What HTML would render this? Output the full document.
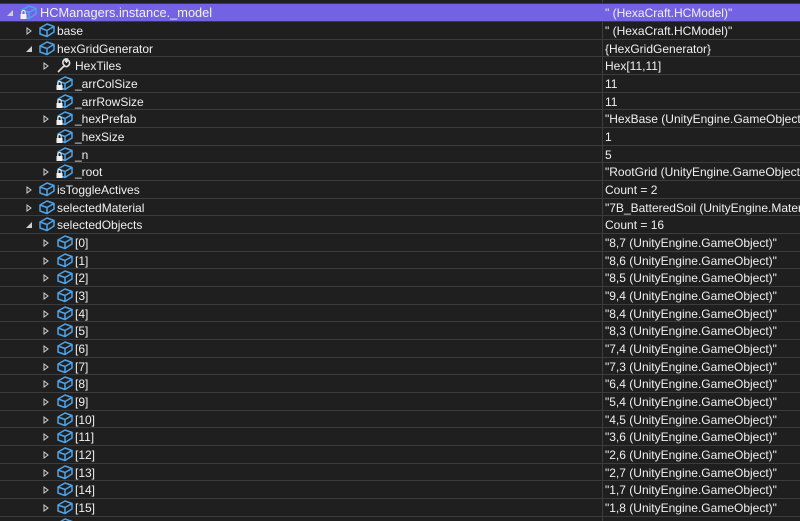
<!DOCTYPE html>
<html style="overflow:hidden;height:521px"><head><meta charset="utf-8"><style>
body{margin:0;width:800px;height:521px;overflow:hidden;background:#1f1f1f;font-family:"Liberation Sans",sans-serif;font-size:12px;color:#f0f0f0;position:relative}
.list{position:absolute;top:-13.2px;left:0;width:800px}
.r{height:16.67px;border-bottom:1px solid #3c3c3c;position:relative;white-space:nowrap}
.r.sel{background:#7462e4}
.n{position:absolute;top:2px}
.v{position:absolute;left:605px;top:2px}
.div{position:absolute;left:602px;top:0;width:1px;height:521px;background:#3c3c3c}
.ar{position:absolute;top:5px}
.ic{position:absolute;top:0px}
</style></head><body>
<svg width="0" height="0" style="position:absolute"><defs>
<g id="box"><path d="M2 6 L9 2 L16 4.5 L16 10 L9 14.5 L2 12 Z M2 6 L9 8.5 L16 4.5 M9 8.5 L9 14.5" fill="none" stroke="#4ea3e8" stroke-width="1.5" stroke-linejoin="round"/></g>
<g id="lock"><rect x="0.5" y="10" width="6" height="5" fill="#f0f0f0"/><path d="M1.8 10 V8.2 a1.7 1.7 0 0 1 3.4 0 V10" fill="none" stroke="#f0f0f0" stroke-width="1.1"/></g>
<g id="col"><path d="M1 1 L5 4 L1 7 Z" fill="none" stroke="#d0d0d0" stroke-width="1"/></g>
<g id="exp"><path d="M6 1 L6 7 L0 7 Z" fill="#d0d0d0"/></g>
</defs></svg>
<div class="div"></div>
<div class="list">
<div class="r"></div>
<div class="r sel"><svg class="ar" style="left:7px" width="8" height="8"><use href="#exp"/></svg><svg class="ic" style="left:20px" width="18" height="16"><use href="#box"/><use href="#lock"/></svg><span class="n" style="left:40px;font-size:12.8px;top:1px">HCManagers.instance._model</span><span class="v">" (HexaCraft.HCModel)"</span></div>
<div class="r"><svg class="ar" style="left:26px" width="8" height="8"><use href="#col"/></svg><svg class="ic" style="left:38px" width="18" height="16"><use href="#box"/></svg><span class="n" style="left:57px">base</span><span class="v">" (HexaCraft.HCModel)"</span></div>
<div class="r"><svg class="ar" style="left:26px" width="8" height="8"><use href="#exp"/></svg><svg class="ic" style="left:38px" width="18" height="16"><use href="#box"/></svg><span class="n" style="left:57px">hexGridGenerator</span><span class="v">{HexGridGenerator}</span></div>
<div class="r"><svg class="ar" style="left:43px" width="8" height="8"><use href="#col"/></svg><svg class="ic" style="left:56px" width="18" height="16"><path d="M2 15 L9 8 M8 9 a3.5 3.5 0 1 0 4-6 L10.5 5 L9.5 4 L11 2 a3.5 3.5 0 0 0 -3 6" fill="none" stroke="#e0e0e0" stroke-width="1.6"/></svg><span class="n" style="left:75px">HexTiles</span><span class="v">Hex[11,11]</span></div>
<div class="r"><svg class="ic" style="left:56px" width="18" height="16"><use href="#box"/><use href="#lock"/></svg><span class="n" style="left:75px">_arrColSize</span><span class="v">11</span></div>
<div class="r"><svg class="ic" style="left:56px" width="18" height="16"><use href="#box"/><use href="#lock"/></svg><span class="n" style="left:75px">_arrRowSize</span><span class="v">11</span></div>
<div class="r"><svg class="ar" style="left:43px" width="8" height="8"><use href="#col"/></svg><svg class="ic" style="left:56px" width="18" height="16"><use href="#box"/><use href="#lock"/></svg><span class="n" style="left:75px">_hexPrefab</span><span class="v">"HexBase (UnityEngine.GameObject)"</span></div>
<div class="r"><svg class="ic" style="left:56px" width="18" height="16"><use href="#box"/><use href="#lock"/></svg><span class="n" style="left:75px">_hexSize</span><span class="v">1</span></div>
<div class="r"><svg class="ic" style="left:56px" width="18" height="16"><use href="#box"/><use href="#lock"/></svg><span class="n" style="left:75px">_n</span><span class="v">5</span></div>
<div class="r"><svg class="ar" style="left:43px" width="8" height="8"><use href="#col"/></svg><svg class="ic" style="left:56px" width="18" height="16"><use href="#box"/><use href="#lock"/></svg><span class="n" style="left:75px">_root</span><span class="v">"RootGrid (UnityEngine.GameObject)"</span></div>
<div class="r"><svg class="ar" style="left:26px" width="8" height="8"><use href="#col"/></svg><svg class="ic" style="left:38px" width="18" height="16"><use href="#box"/></svg><span class="n" style="left:57px">isToggleActives</span><span class="v">Count = 2</span></div>
<div class="r"><svg class="ar" style="left:26px" width="8" height="8"><use href="#col"/></svg><svg class="ic" style="left:38px" width="18" height="16"><use href="#box"/></svg><span class="n" style="left:57px">selectedMaterial</span><span class="v">"7B_BatteredSoil (UnityEngine.Material)"</span></div>
<div class="r"><svg class="ar" style="left:26px" width="8" height="8"><use href="#exp"/></svg><svg class="ic" style="left:38px" width="18" height="16"><use href="#box"/></svg><span class="n" style="left:57px">selectedObjects</span><span class="v">Count = 16</span></div>
<div class="r"><svg class="ar" style="left:43px" width="8" height="8"><use href="#col"/></svg><svg class="ic" style="left:56px" width="18" height="16"><use href="#box"/></svg><span class="n" style="left:75px">[0]</span><span class="v">"8,7 (UnityEngine.GameObject)"</span></div>
<div class="r"><svg class="ar" style="left:43px" width="8" height="8"><use href="#col"/></svg><svg class="ic" style="left:56px" width="18" height="16"><use href="#box"/></svg><span class="n" style="left:75px">[1]</span><span class="v">"8,6 (UnityEngine.GameObject)"</span></div>
<div class="r"><svg class="ar" style="left:43px" width="8" height="8"><use href="#col"/></svg><svg class="ic" style="left:56px" width="18" height="16"><use href="#box"/></svg><span class="n" style="left:75px">[2]</span><span class="v">"8,5 (UnityEngine.GameObject)"</span></div>
<div class="r"><svg class="ar" style="left:43px" width="8" height="8"><use href="#col"/></svg><svg class="ic" style="left:56px" width="18" height="16"><use href="#box"/></svg><span class="n" style="left:75px">[3]</span><span class="v">"9,4 (UnityEngine.GameObject)"</span></div>
<div class="r"><svg class="ar" style="left:43px" width="8" height="8"><use href="#col"/></svg><svg class="ic" style="left:56px" width="18" height="16"><use href="#box"/></svg><span class="n" style="left:75px">[4]</span><span class="v">"8,4 (UnityEngine.GameObject)"</span></div>
<div class="r"><svg class="ar" style="left:43px" width="8" height="8"><use href="#col"/></svg><svg class="ic" style="left:56px" width="18" height="16"><use href="#box"/></svg><span class="n" style="left:75px">[5]</span><span class="v">"8,3 (UnityEngine.GameObject)"</span></div>
<div class="r"><svg class="ar" style="left:43px" width="8" height="8"><use href="#col"/></svg><svg class="ic" style="left:56px" width="18" height="16"><use href="#box"/></svg><span class="n" style="left:75px">[6]</span><span class="v">"7,4 (UnityEngine.GameObject)"</span></div>
<div class="r"><svg class="ar" style="left:43px" width="8" height="8"><use href="#col"/></svg><svg class="ic" style="left:56px" width="18" height="16"><use href="#box"/></svg><span class="n" style="left:75px">[7]</span><span class="v">"7,3 (UnityEngine.GameObject)"</span></div>
<div class="r"><svg class="ar" style="left:43px" width="8" height="8"><use href="#col"/></svg><svg class="ic" style="left:56px" width="18" height="16"><use href="#box"/></svg><span class="n" style="left:75px">[8]</span><span class="v">"6,4 (UnityEngine.GameObject)"</span></div>
<div class="r"><svg class="ar" style="left:43px" width="8" height="8"><use href="#col"/></svg><svg class="ic" style="left:56px" width="18" height="16"><use href="#box"/></svg><span class="n" style="left:75px">[9]</span><span class="v">"5,4 (UnityEngine.GameObject)"</span></div>
<div class="r"><svg class="ar" style="left:43px" width="8" height="8"><use href="#col"/></svg><svg class="ic" style="left:56px" width="18" height="16"><use href="#box"/></svg><span class="n" style="left:75px">[10]</span><span class="v">"4,5 (UnityEngine.GameObject)"</span></div>
<div class="r"><svg class="ar" style="left:43px" width="8" height="8"><use href="#col"/></svg><svg class="ic" style="left:56px" width="18" height="16"><use href="#box"/></svg><span class="n" style="left:75px">[11]</span><span class="v">"3,6 (UnityEngine.GameObject)"</span></div>
<div class="r"><svg class="ar" style="left:43px" width="8" height="8"><use href="#col"/></svg><svg class="ic" style="left:56px" width="18" height="16"><use href="#box"/></svg><span class="n" style="left:75px">[12]</span><span class="v">"2,6 (UnityEngine.GameObject)"</span></div>
<div class="r"><svg class="ar" style="left:43px" width="8" height="8"><use href="#col"/></svg><svg class="ic" style="left:56px" width="18" height="16"><use href="#box"/></svg><span class="n" style="left:75px">[13]</span><span class="v">"2,7 (UnityEngine.GameObject)"</span></div>
<div class="r"><svg class="ar" style="left:43px" width="8" height="8"><use href="#col"/></svg><svg class="ic" style="left:56px" width="18" height="16"><use href="#box"/></svg><span class="n" style="left:75px">[14]</span><span class="v">"1,7 (UnityEngine.GameObject)"</span></div>
<div class="r"><svg class="ar" style="left:43px" width="8" height="8"><use href="#col"/></svg><svg class="ic" style="left:56px" width="18" height="16"><use href="#box"/></svg><span class="n" style="left:75px">[15]</span><span class="v">"1,8 (UnityEngine.GameObject)"</span></div>
<div class="r"><svg class="ic" style="left:56px" width="18" height="16"><use href="#box"/></svg></div>
</div>
</body></html>
